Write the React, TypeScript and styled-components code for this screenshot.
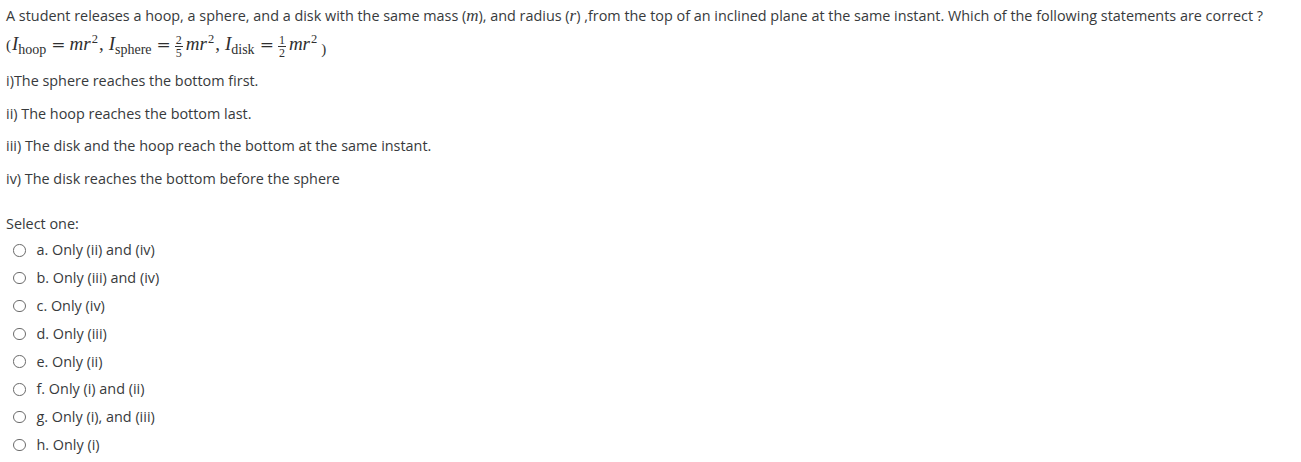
import styled, { createGlobalStyle } from "styled-components";

const GlobalStyle = createGlobalStyle`
  body {
    margin: 0;
    background: #ffffff;
    font-family: "Open Sans", "Liberation Sans", sans-serif;
    font-size: 14.4px;
    color: #373a3c;
  }
`;

const options = [
  "a. Only (ii) and (iv)",
  "b. Only (iii) and (iv)",
  "c. Only (iv)",
  "d. Only (iii)",
  "e. Only (ii)",
  "f. Only (i) and (ii)",
  "g. Only (i), and (iii)",
  "h. Only (i)",
];

const statements = [
  "i)The sphere reaches the bottom first.",
  "ii) The hoop reaches the bottom last.",
  "iii) The disk and the hoop reach the bottom at the same instant.",
  "iv) The disk reaches the bottom before the sphere",
];

const Frac = ({ top, bottom }: { top: string; bottom: string }) => (
  <FracBox>
    <FracTop>{top}</FracTop>
    <FracBottom>{bottom}</FracBottom>
  </FracBox>
);

const MR2 = () => (
  <>
    <Var>mr</Var>
    <Sup>2</Sup>
  </>
);

export default function App() {
  return (
    <>
      <GlobalStyle />
      <Question>
        <Para>
          A student releases a hoop, a sphere, and a disk with the same mass (
          <InlineVar>m</InlineVar>), and radius (<InlineVar>r</InlineVar>)
          ,from the top of an inclined plane at the same instant. Which of the
          following statements are correct ?
        </Para>
        <MathPara>
          <MathRun>
            <Paren>(</Paren>
            <Var>I</Var>
            <Sub>hoop</Sub>
            <Eq>=</Eq>
            <MR2 />
            <Comma>,</Comma>
            <Var>I</Var>
            <Sub>sphere</Sub>
            <Eq>=</Eq>
            <Frac top="2" bottom="5" />
            <MR2 />
            <Comma>,</Comma>
            <Var>I</Var>
            <Sub>disk</Sub>
            <Eq>=</Eq>
            <Frac top="1" bottom="2" />
            <MR2 />
          </MathRun>
          <CloseParen>)</CloseParen>
        </MathPara>
        {statements.map((s) => (
          <Para key={s}>{s}</Para>
        ))}
        <Prompt>Select one:</Prompt>
        <OptionList>
          {options.map((o) => (
            <Option key={o}>
              <Radio />
              <OptionLabel>{o}</OptionLabel>
            </Option>
          ))}
        </OptionList>
      </Question>
    </>
  );
}

const Question = styled.div`
  padding: 6px 6px 0 6px;
`;

const Para = styled.p`
  margin: 0 0 12.5px 0;
  line-height: 20px;
  white-space: nowrap;
`;

const MathPara = styled(Para)`
  display: flex;
  align-items: center;
  height: 20px;
`;

const MathRun = styled.span`
  font-family: "Liberation Serif", "DejaVu Serif", serif;
  font-size: 19px;
  line-height: 20px;
  display: inline-flex;
  align-items: baseline;
  color: #2f2f2f;
`;

const Var = styled.span`
  font-style: italic;
`;

const InlineVar = styled.span`
  font-family: "Liberation Serif", serif;
  font-style: italic;
  font-size: 17px;
`;

const Paren = styled.span`
  font-size: 15px;
  margin-right: 1px;
`;

const CloseParen = styled.span`
  margin-left: 4px;
  font-family: "Liberation Serif", serif;
  font-size: 15px;
  color: #333333;
`;

const Sub = styled.span`
  font-size: 14px;
  position: relative;
  top: 4px;
`;

const Sup = styled.span`
  font-size: 12.5px;
  position: relative;
  top: -7px;
  margin-left: 1px;
`;

const Eq = styled.span`
  font-family: "DejaVu Serif", serif;
  font-size: 17px;
  margin: 0 4px 0 5px;
`;

const Comma = styled.span`
  margin: 0 5px 0 1px;
`;

const FracBox = styled.span`
  display: inline-flex;
  flex-direction: column;
  align-items: center;
  font-size: 12px;
  line-height: 10px;
  margin: 0 3px 0 0;
  transform: translateY(-6px);
`;

const FracTop = styled.span`
  border-bottom: 1px solid #333333;
  padding: 0 1px 1px;
`;

const FracBottom = styled.span`
  padding-top: 1px;
`;

const Prompt = styled.div`
  margin-top: 25px;
  line-height: 20px;
`;

const OptionList = styled.div`
  display: flex;
  flex-direction: column;
  padding-top: 3px;
`;

const Option = styled.label`
  display: flex;
  align-items: center;
  height: 27.8px;
  padding-left: 7px;
`;

const Radio = styled.span`
  width: 12.5px;
  height: 12.5px;
  border: 1.3px solid #6b6b6b;
  border-radius: 50%;
  box-sizing: border-box;
  margin-right: 11px;
  flex-shrink: 0;
`;

const OptionLabel = styled.span`
  line-height: 20px;
`;
